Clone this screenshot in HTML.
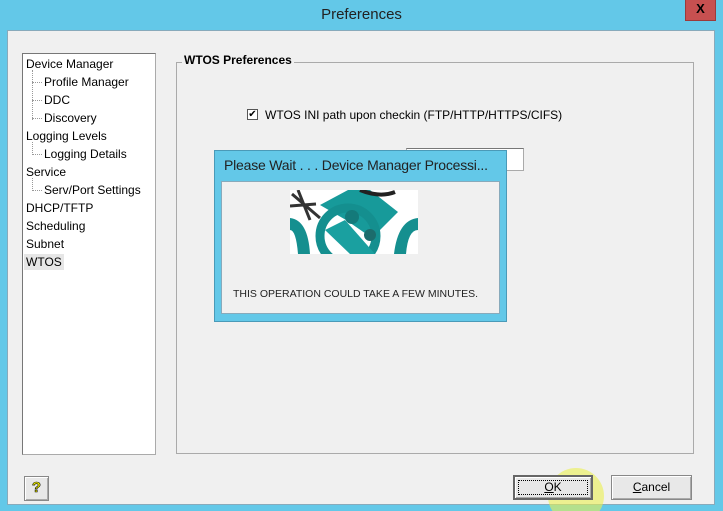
<!DOCTYPE html>
<html style="overflow:hidden;width:723px;height:511px"><head><style>
*{margin:0;padding:0;box-sizing:border-box}
body{width:723px;height:511px;background:#63c8e8;font-family:"Liberation Sans",sans-serif;font-size:12px;color:#000;position:relative;overflow:hidden}
.a{position:absolute}
.title{left:0;top:6px;width:723px;text-align:center;font-size:15px;color:#222}
.close{left:685px;top:0;width:31px;height:21px;background:#c75050;border:1px solid #9c3a3a;border-top:none;color:#000;font-weight:bold;font-size:13px;text-align:center;line-height:18px}
.client{left:7px;top:30px;width:708px;height:475px;background:#f0f0f0;border:1px solid #8ab}
.tree{left:22px;top:53px;width:134px;height:402px;background:#fff;border:1px solid #aaa;border-top-color:#777;border-left-color:#777}
.tree div{position:absolute;white-space:nowrap;font-size:12px}
.grp{left:176px;top:62px;width:518px;height:392px;border:1px solid #aaa}
.lbl{left:182px;top:53px;background:#f0f0f0;padding:0 2px;font-weight:bold;font-size:12px}
.btn{background:#e8e8e8;border:1px solid #888;box-shadow:inset 1px 1px #fff,inset -1px -1px #aaa;text-align:center;font-size:12px}
</style></head><body>
<div class="a title">Preferences</div>
<div class="a close">X</div>
<div class="a client"></div>
<div class="a tree">
<div style="left:3px;top:3px">Device Manager</div>
<div style="left:9px;top:16px;width:10px;height:50px;border-left:1px dotted #999"></div>
<div style="left:9px;top:28px;width:10px;border-top:1px dotted #999"></div>
<div style="left:9px;top:46px;width:10px;border-top:1px dotted #999"></div>
<div style="left:9px;top:64px;width:10px;border-top:1px dotted #999"></div>
<div style="left:21px;top:21px">Profile Manager</div>
<div style="left:21px;top:39px">DDC</div>
<div style="left:21px;top:57px">Discovery</div>
<div style="left:3px;top:75px">Logging Levels</div>
<div style="left:9px;top:88px;width:10px;height:13px;border-left:1px dotted #999;border-bottom:1px dotted #999"></div>
<div style="left:21px;top:93px">Logging Details</div>
<div style="left:3px;top:111px">Service</div>
<div style="left:9px;top:124px;width:10px;height:13px;border-left:1px dotted #999;border-bottom:1px dotted #999"></div>
<div style="left:21px;top:129px">Serv/Port Settings</div>
<div style="left:3px;top:147px">DHCP/TFTP</div>
<div style="left:3px;top:165px">Scheduling</div>
<div style="left:3px;top:183px">Subnet</div>
<div style="left:1px;top:200px;background:#e6e6e6;padding:1px 2px;width:40px">WTOS</div>
</div>
<div class="a grp"></div>
<div class="a lbl">WTOS Preferences</div>
<div class="a" style="left:247px;top:109px;width:11px;height:11px;border:1px solid #555;background:#fff;font-size:10px;line-height:9px;text-align:center">✔</div>
<div class="a" style="left:265px;top:108px;font-size:12px">WTOS INI path upon checkin (FTP/HTTP/HTTPS/CIFS)</div>
<div class="a" style="left:406px;top:148px;width:118px;height:23px;background:#fff;border:1px solid #aaa;border-top-color:#777"></div>
<div class="a" style="left:214px;top:150px;width:293px;height:172px;background:#63c8e8;border:1px solid #4a9ab8"></div>
<div class="a" style="left:224px;top:157px;font-size:14px;color:#222;white-space:nowrap;letter-spacing:-0.2px">Please Wait . . . Device Manager Processi...</div>
<div class="a" style="left:221px;top:181px;width:279px;height:133px;background:#f0f0f0;border:1px solid #8ab"></div>
<svg class="a" style="left:290px;top:190px" width="128" height="64" viewBox="0 0 128 64">
<rect width="128" height="64" fill="#fff"/>
<polygon points="30,15 58,0 80,0 108,22 82,48 56,30" fill="#179a9a"/>
<circle cx="58" cy="46" r="28" fill="none" stroke="#148f8f" stroke-width="9"/>
<polygon points="35,40 60,64 85,64 55,30" fill="#1aa0a0"/>
<circle cx="62" cy="27" r="7" fill="#147a7a"/>
<circle cx="80" cy="45" r="6" fill="#1c6c6c"/>
<path d="M0,28 Q18,30 20,64 L8,64 Q6,40 0,40Z" fill="#158f8f"/>
<path d="M128,28 Q108,30 104,64 L116,64 Q118,40 128,40Z" fill="#158f8f"/>
<path d="M2,4 L30,28 M8,0 L20,30 M0,16 L26,14" stroke="#333" stroke-width="3"/>
<path d="M70,0 Q90,8 105,2" stroke="#222" stroke-width="4" fill="none"/>
</svg>
<div class="a" style="left:233px;top:288px;font-size:10.5px;color:#222;white-space:nowrap">THIS OPERATION COULD TAKE A FEW MINUTES.</div>
<div class="a btn" style="left:24px;top:476px;width:25px;height:25px;font-weight:bold;font-size:15px;color:#ee0;-webkit-text-stroke:0.6px #000;line-height:22px">?</div>
<div class="a" style="left:548px;top:468px;width:56px;height:56px;border-radius:50%;background:rgba(235,240,80,0.6)"></div>
<div class="a btn" style="left:513px;top:475px;width:80px;height:25px;border:2px solid #666;line-height:20px"><div style="position:absolute;left:3px;top:3px;right:3px;bottom:3px;border:1px dotted #000"></div><u>O</u>K</div>
<div class="a btn" style="left:611px;top:475px;width:81px;height:25px;line-height:23px"><u>C</u>ancel</div>
</body></html>
